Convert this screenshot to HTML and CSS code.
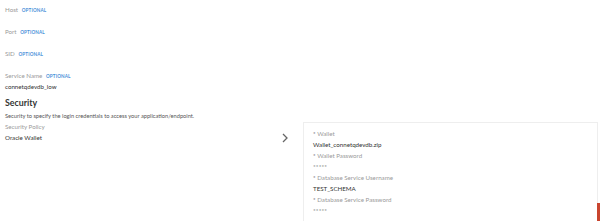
FILE: index.html
```html
<!DOCTYPE html>
<html>
<head>
<meta charset="utf-8">
<link rel="stylesheet" href="styles.css">
</head>
<body>
<div class="page">
  <div class="field"><div class="label">Host <span class="opt">OPTIONAL</span></div><div class="value"></div></div>
  <div class="field"><div class="label">Port <span class="opt">OPTIONAL</span></div><div class="value"></div></div>
  <div class="field"><div class="label">SID <span class="opt">OPTIONAL</span></div><div class="value"></div></div>
  <div class="field"><div class="label">Service Name <span class="opt">OPTIONAL</span></div><div class="value">connetqdevdb_low</div></div>
  <h2 class="heading">Security</h2>
  <div class="desc">Security to specify the login credentials to access your application/endpoint.</div>
  <div class="security">
    <div class="policy">
      <div class="label">Security Policy</div>
      <div class="value">Oracle Wallet</div>
    </div>
    <div class="chev">
      <svg width="8" height="10" viewBox="0 0 8 10"><path d="M2 1 L6 5 L2 9" fill="none" stroke="#666" stroke-width="1.3"/></svg>
    </div>
    <div class="panel">
      <div class="label"><span class="req">*</span> Wallet</div>
      <div class="value">Wallet_connetqdevdb.zip</div>
      <div class="label"><span class="req">*</span> Wallet Password</div>
      <div class="value mask">*****</div>
      <div class="label"><span class="req">*</span> Database Service Username</div>
      <div class="value">TEST_SCHEMA</div>
      <div class="label"><span class="req">*</span> Database Service Password</div>
      <div class="value mask">*****</div>
    </div>
  </div>
</div>
<div class="redbar"></div>
</body>
</html>
```
FILE: styles.css
```css
html, body { margin: 0; padding: 0; background: #fff; overflow: hidden; }
body { font-family: Lato, "Open Sans", sans-serif; color: #333; width: 600px; height: 221px; position: relative; }
.page { padding: 4px 0 0 5px; }
.field { height: 22px; }
.label { font-size: 6.2px; color: #9a9a9a; line-height: 11px; height: 11px; }
.value { font-size: 6.2px; color: #333; line-height: 11px; height: 11px; }
.opt { font-size: 4.6px; font-weight: 700; color: #4a90d9; letter-spacing: 0.15px; margin-left: 2px; vertical-align: 0.5px; }
.heading { margin: 4px 0 0 0; font-size: 8.8px; font-weight: 700; color: #333; line-height: 14px; height: 14px; }
.desc { font-size: 5.7px; color: #555; line-height: 11px; height: 11px; }
.security { display: flex; }
.policy { width: 276px; }
.chev { width: 22px; padding-top: 6px; }
.panel { flex: 1; box-sizing: border-box; border-top: 1px solid #eee; border-left: 1px solid #eee; border-right: 1px solid #eee; margin-top: 1px; padding: 5px 0 0 9px; height: 99px; margin-right: 2px; }
.req { color: #777; }
.mask { color: #888; font-size: 6.4px; letter-spacing: 0.1px; }
.redbar { position: absolute; right: 0; bottom: 0; width: 3px; height: 18px; background: #c9452f; }
```
